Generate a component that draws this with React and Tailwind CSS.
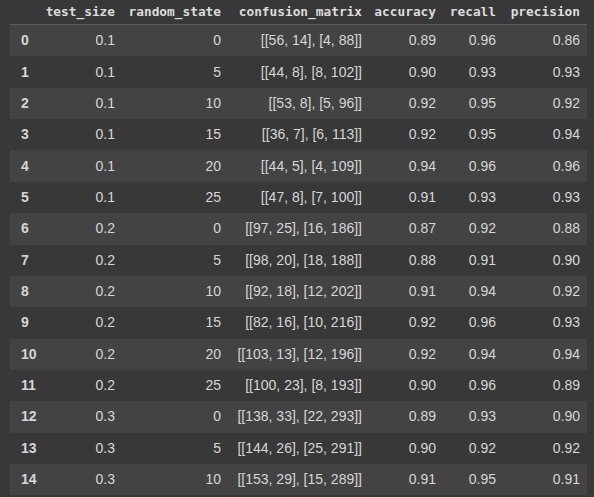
import React from "react";

const rows = [
  [0, "0.1", 0, "[[56, 14], [4, 88]]", "0.89", "0.96", "0.86"],
  [1, "0.1", 5, "[[44, 8], [8, 102]]", "0.90", "0.93", "0.93"],
  [2, "0.1", 10, "[[53, 8], [5, 96]]", "0.92", "0.95", "0.92"],
  [3, "0.1", 15, "[[36, 7], [6, 113]]", "0.92", "0.95", "0.94"],
  [4, "0.1", 20, "[[44, 5], [4, 109]]", "0.94", "0.96", "0.96"],
  [5, "0.1", 25, "[[47, 8], [7, 100]]", "0.91", "0.93", "0.93"],
  [6, "0.2", 0, "[[97, 25], [16, 186]]", "0.87", "0.92", "0.88"],
  [7, "0.2", 5, "[[98, 20], [18, 188]]", "0.88", "0.91", "0.90"],
  [8, "0.2", 10, "[[92, 18], [12, 202]]", "0.91", "0.94", "0.92"],
  [9, "0.2", 15, "[[82, 16], [10, 216]]", "0.92", "0.96", "0.93"],
  [10, "0.2", 20, "[[103, 13], [12, 196]]", "0.92", "0.94", "0.94"],
  [11, "0.2", 25, "[[100, 23], [8, 193]]", "0.90", "0.96", "0.89"],
  [12, "0.3", 0, "[[138, 33], [22, 293]]", "0.89", "0.93", "0.90"],
  [13, "0.3", 5, "[[144, 26], [25, 291]]", "0.90", "0.92", "0.92"],
  [14, "0.3", 10, "[[153, 29], [15, 289]]", "0.91", "0.95", "0.91"],
];

const headers = ["test_size", "random_state", "confusion_matrix", "accuracy", "recall", "precision"];
const cols = "grid grid-cols-[30px_82px_106px_141px_74px_60px_84px]";

export default function App() {
  return (
    <div className="w-[594px] h-[497px] overflow-hidden bg-[#383838] pl-[10px] text-[#d6d6d6] font-['Liberation_Sans',Arial,sans-serif]">
      <div className="w-[577px]">
        <div className={`${cols} h-[25px] items-center border-b border-[#5f5f5f] font-['DejaVu_Sans_Mono',monospace] text-[12.8px] font-bold text-[#dcdcdc]`}>
          <div />
          {headers.map((h) => (
            <div key={h} className="text-right pr-[7px] leading-none">{h}</div>
          ))}
        </div>
        {rows.map((r, i) => (
          <div
            key={r[0]}
            className={`${cols} h-[31.36px] items-center text-[14px] ${i % 2 === 0 ? "bg-[#434343]" : ""}`}
          >
            <div className="pl-[11px] font-bold">{r[0]}</div>
            {r.slice(1).map((v, j) => (
              <div key={j} className="text-right pr-[7px] whitespace-nowrap">{v}</div>
            ))}
          </div>
        ))}
      </div>
    </div>
  );
}
